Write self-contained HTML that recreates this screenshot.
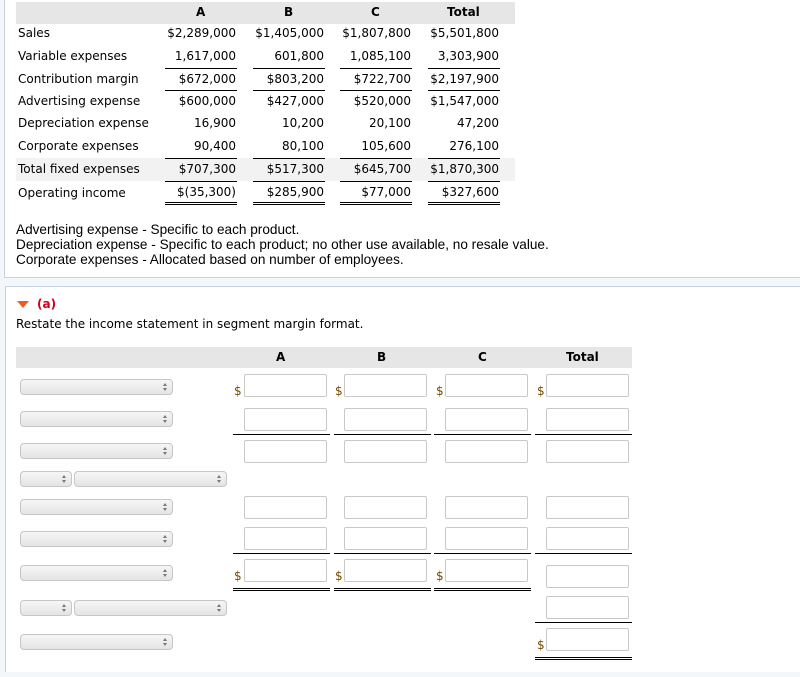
<!DOCTYPE html>
<html style="width:800px;height:677px;overflow:hidden"><head><meta charset="utf-8"><style>
body{margin:0;width:800px;height:677px;background:#f4f7fa;font-family:"DejaVu Sans","Liberation Sans",sans-serif;font-size:12px;color:#000;position:relative;overflow:hidden}
.p{position:absolute;background:#fff;border:1px solid #c9d3df}
.a{position:absolute;white-space:nowrap}
.r{position:absolute;text-align:right;width:90px;white-space:nowrap}
.hl{position:absolute;height:1px;background:#000}
.dl{position:absolute;height:2px;border-top:1px solid #000;border-bottom:1px solid #000;height:1px}
.in{position:absolute;width:81px;height:21px;border:1px solid #c8c8c8;border-radius:2px;background:#fff}
.sel{position:absolute;height:14px;border:1px solid #c6c6c6;border-radius:4px;background:linear-gradient(#f6f6f6,#e4e4e4)}
.sel:after{content:"";position:absolute;right:5px;top:3px;width:0;height:0;border-left:2.5px solid transparent;border-right:2.5px solid transparent;border-bottom:3px solid #777}
.sel:before{content:"";position:absolute;right:5px;top:8px;width:0;height:0;border-left:2.5px solid transparent;border-right:2.5px solid transparent;border-top:3px solid #777}
.d{position:absolute;font-size:12px;color:#7a4a00}
</style></head><body>
<div class="p" style="left:4px;top:-1px;width:820px;height:277px"></div>
<div class="p" style="left:5px;top:286px;width:820px;height:385px;border-bottom:none"></div>

<div class="a" style="left:16px;top:2px;width:499px;height:22px;background:#e6e6e6"></div>
<div class="a" style="left:16px;top:158px;width:499px;height:23px;background:#f2f2f2"></div>
<div class="a" style="left:196px;top:5px;font-weight:bold">A</div>
<div class="a" style="left:284px;top:5px;font-weight:bold">B</div>
<div class="a" style="left:371px;top:5px;font-weight:bold">C</div>
<div class="a" style="left:447px;top:5px;font-weight:bold">Total</div>

<div class="a" style="left:18px;top:26px">Sales</div>
<div class="a" style="left:18px;top:49px">Variable expenses</div>
<div class="a" style="left:18px;top:72px">Contribution margin</div>
<div class="a" style="left:18px;top:94px">Advertising expense</div>
<div class="a" style="left:18px;top:116px">Depreciation expense</div>
<div class="a" style="left:18px;top:139px">Corporate expenses</div>
<div class="a" style="left:18px;top:162px">Total fixed expenses</div>
<div class="a" style="left:18px;top:186px">Operating income</div>

<div class="r" style="left:146px;top:26px">$2,289,000</div><div class="r" style="left:234px;top:26px">$1,405,000</div><div class="r" style="left:321px;top:26px">$1,807,800</div><div class="r" style="left:409px;top:26px">$5,501,800</div>
<div class="r" style="left:146px;top:49px">1,617,000</div><div class="r" style="left:234px;top:49px">601,800</div><div class="r" style="left:321px;top:49px">1,085,100</div><div class="r" style="left:409px;top:49px">3,303,900</div>
<div class="r" style="left:146px;top:72px">$672,000</div><div class="r" style="left:234px;top:72px">$803,200</div><div class="r" style="left:321px;top:72px">$722,700</div><div class="r" style="left:409px;top:72px">$2,197,900</div>
<div class="r" style="left:146px;top:94px">$600,000</div><div class="r" style="left:234px;top:94px">$427,000</div><div class="r" style="left:321px;top:94px">$520,000</div><div class="r" style="left:409px;top:94px">$1,547,000</div>
<div class="r" style="left:146px;top:116px">16,900</div><div class="r" style="left:234px;top:116px">10,200</div><div class="r" style="left:321px;top:116px">20,100</div><div class="r" style="left:409px;top:116px">47,200</div>
<div class="r" style="left:146px;top:139px">90,400</div><div class="r" style="left:234px;top:139px">80,100</div><div class="r" style="left:321px;top:139px">105,600</div><div class="r" style="left:409px;top:139px">276,100</div>
<div class="r" style="left:146px;top:162px">$707,300</div><div class="r" style="left:234px;top:162px">$517,300</div><div class="r" style="left:321px;top:162px">$645,700</div><div class="r" style="left:409px;top:162px">$1,870,300</div>
<div class="r" style="left:146px;top:185px">$(35,300)</div><div class="r" style="left:234px;top:185px">$285,900</div><div class="r" style="left:321px;top:185px">$77,000</div><div class="r" style="left:409px;top:185px">$327,600</div>

<div class="hl" style="left:165px;top:68px;width:72px"></div><div class="hl" style="left:253px;top:68px;width:72px"></div><div class="hl" style="left:340px;top:68px;width:72px"></div><div class="hl" style="left:428px;top:68px;width:72px"></div>
<div class="hl" style="left:165px;top:90px;width:72px"></div><div class="hl" style="left:253px;top:90px;width:72px"></div><div class="hl" style="left:340px;top:90px;width:72px"></div><div class="hl" style="left:428px;top:90px;width:72px"></div>
<div class="hl" style="left:165px;top:158px;width:72px"></div><div class="hl" style="left:253px;top:158px;width:72px"></div><div class="hl" style="left:340px;top:158px;width:72px"></div><div class="hl" style="left:428px;top:158px;width:72px"></div>
<div class="hl" style="left:165px;top:181px;width:72px"></div><div class="hl" style="left:253px;top:181px;width:72px"></div><div class="hl" style="left:340px;top:181px;width:72px"></div><div class="hl" style="left:428px;top:181px;width:72px"></div>
<div class="dl" style="left:165px;top:202px;width:72px"></div><div class="dl" style="left:253px;top:202px;width:72px"></div><div class="dl" style="left:340px;top:202px;width:72px"></div><div class="dl" style="left:428px;top:202px;width:72px"></div>

<div class="a" style="left:16px;top:222px;line-height:15px;font-family:'Liberation Sans',sans-serif;font-size:13.6px">Advertising expense - Specific to each product.<br>Depreciation expense - Specific to each product; no other use available, no resale value.<br>Corporate expenses - Allocated based on number of employees.</div>

<div class="a" style="left:17px;top:301px;width:0;height:0;border-left:6px solid transparent;border-right:6px solid transparent;border-top:7px solid #f05a24"></div>
<div class="a" style="left:37px;top:297px;color:#d0021b;font-weight:bold">(a)</div>
<div class="a" style="left:16px;top:317px;font-size:12px">Restate the income statement in segment margin format.</div>
<div class="a" style="left:16px;top:347px;width:616px;height:21px;background:#e6e6e6"></div>
<div class="a" style="left:276px;top:350px;font-weight:bold">A</div>
<div class="a" style="left:377px;top:350px;font-weight:bold">B</div>
<div class="a" style="left:478px;top:350px;font-weight:bold">C</div>
<div class="a" style="left:566px;top:350px;font-weight:bold">Total</div>

<div class="sel" style="left:20px;top:379px;width:151px"></div>
<div class="sel" style="left:20px;top:411px;width:151px"></div>
<div class="sel" style="left:20px;top:443px;width:151px"></div>
<div class="sel" style="left:20px;top:471px;width:50px"></div><div class="sel" style="left:74px;top:471px;width:151px"></div>
<div class="sel" style="left:20px;top:499px;width:151px"></div>
<div class="sel" style="left:20px;top:531px;width:151px"></div>
<div class="sel" style="left:20px;top:565px;width:151px"></div>
<div class="sel" style="left:20px;top:600px;width:50px"></div><div class="sel" style="left:74px;top:600px;width:151px"></div>
<div class="sel" style="left:20px;top:634px;width:151px"></div>

<div class="d" style="left:234px;top:384px">$</div><div class="in" style="left:244px;top:374px"></div>
<div class="d" style="left:335px;top:384px">$</div><div class="in" style="left:344px;top:374px"></div>
<div class="d" style="left:436px;top:384px">$</div><div class="in" style="left:445px;top:374px"></div>
<div class="d" style="left:537px;top:384px">$</div><div class="in" style="left:546px;top:374px"></div>
<div class="in" style="left:244px;top:408px"></div><div class="in" style="left:344px;top:408px"></div><div class="in" style="left:445px;top:408px"></div><div class="in" style="left:546px;top:408px"></div>
<div class="hl" style="left:233px;top:434px;width:97px"></div><div class="hl" style="left:334px;top:434px;width:97px"></div><div class="hl" style="left:434px;top:434px;width:97px"></div><div class="hl" style="left:535px;top:434px;width:97px"></div>
<div class="in" style="left:244px;top:440px"></div><div class="in" style="left:344px;top:440px"></div><div class="in" style="left:445px;top:440px"></div><div class="in" style="left:546px;top:440px"></div>
<div class="in" style="left:244px;top:496px"></div><div class="in" style="left:344px;top:496px"></div><div class="in" style="left:445px;top:496px"></div><div class="in" style="left:546px;top:496px"></div>
<div class="in" style="left:244px;top:527px"></div><div class="in" style="left:344px;top:527px"></div><div class="in" style="left:445px;top:527px"></div><div class="in" style="left:546px;top:527px"></div>
<div class="hl" style="left:233px;top:553px;width:97px"></div><div class="hl" style="left:334px;top:553px;width:97px"></div><div class="hl" style="left:434px;top:553px;width:97px"></div><div class="hl" style="left:535px;top:553px;width:97px"></div>
<div class="d" style="left:234px;top:569px">$</div><div class="in" style="left:244px;top:559px"></div>
<div class="d" style="left:335px;top:569px">$</div><div class="in" style="left:344px;top:559px"></div>
<div class="d" style="left:436px;top:569px">$</div><div class="in" style="left:445px;top:559px"></div>
<div class="dl" style="left:233px;top:588px;width:97px"></div><div class="dl" style="left:334px;top:588px;width:97px"></div><div class="dl" style="left:434px;top:588px;width:97px"></div>
<div class="in" style="left:546px;top:565px"></div>
<div class="in" style="left:546px;top:596px"></div>
<div class="hl" style="left:535px;top:622px;width:97px"></div>
<div class="d" style="left:537px;top:638px">$</div><div class="in" style="left:546px;top:628px"></div>
<div class="dl" style="left:535px;top:657px;width:97px"></div>
</body></html>
